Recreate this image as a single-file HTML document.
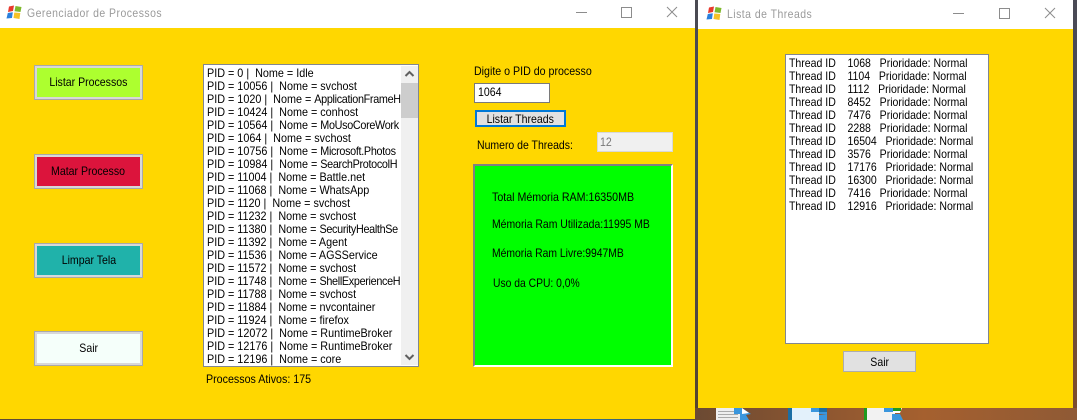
<!DOCTYPE html>
<html><head><meta charset="utf-8"><style>
html,body{margin:0;padding:0;width:1077px;height:420px;overflow:hidden;background:#3e3a36}
*{box-sizing:border-box}
body{position:relative;font-family:"Liberation Sans",sans-serif;font-size:12px;color:#000;line-height:13px}
.a{position:absolute}
.t{position:absolute;white-space:pre;transform-origin:0 0;transform:scaleX(.88)}
.btn{position:absolute;text-align:center;white-space:pre}
.btn span{display:inline-block;transform:scaleX(.88)}
.ti{position:absolute;font-size:12px;color:#9a9a9a;letter-spacing:.55px;white-space:pre;transform-origin:0 0;transform:scaleX(.87)}
.n{letter-spacing:-.35px}
</style></head><body>
<div class="a" style="left:695px;top:408px;width:382px;height:12px;background:linear-gradient(90deg,#6b4a33,#8a5530 30%,#a5602f 60%,#8f5a35)"></div>
<div class="a" style="left:695px;top:0;width:3px;height:408px;background:linear-gradient(#4a4a52 60%,#54432f)"></div>
<div class="a" style="left:1073px;top:0;width:4px;height:408px;background:linear-gradient(#4a4a55 55%,#7c4d2e 92%)"></div>
<div class="a" style="left:0;top:419px;width:695px;height:1px;background:linear-gradient(90deg,#5a4a3a,#6a5a50 30%,#3e3a36 60%,#2f6f90 85%,#5a4a3a)"></div>

<svg class="a" style="left:716px;top:408px" width="190" height="12" viewBox="0 0 190 12">
<rect x="0" y="0" width="26" height="12" fill="#efefef"/><rect x="2" y="3" width="20" height="1" fill="#aaa"/><rect x="2" y="6" width="20" height="1" fill="#aaa"/><rect x="2" y="9" width="20" height="1" fill="#aaa"/><rect x="18" y="0" width="8" height="6" fill="#3a96dd"/><path d="M26 0l9 6-5 1 3 5H24V6z" fill="#3a96dd"/><path d="M26 0l7 5-7 1z" fill="#fff"/>
<rect x="72" y="0" width="4" height="12" fill="#1c6ea4"/><rect x="76" y="0" width="27" height="12" fill="#e3f1fb"/><rect x="95" y="0" width="8" height="4" fill="#3a96dd"/><path d="M103 0h8v6l-8 1v5h8V6h-8z" fill="#3a96dd"/><rect x="103" y="0" width="8" height="4" fill="#1c6ea4"/>
<rect x="148" y="0" width="3" height="12" fill="#1f9a1f"/><rect x="151" y="0" width="28" height="12" fill="#f2f2f2"/><rect x="168" y="0" width="9" height="4" fill="#3a96dd"/><path d="M177 0h9l-2 5h-7z" fill="#fff"/><path d="M177 0h8v3h-8z" fill="#1f9a1f"/><path d="M176 6h8l3 6h-11z" fill="#3a96dd"/>
</svg>

<!-- janela 1 -->
<div class="a" style="left:0;top:0;width:695px;height:28px;background:#fff"></div>
<div class="a" style="left:0;top:28px;width:695px;height:391px;background:#ffd700"></div>
<svg class="a" style="left:6px;top:5px" width="17" height="15" viewBox="0 0 17 15"><path d="M3 1.500 8 .5 7 6 2 7z" fill="#e8382c"/><path d="M9.500 1 15.500 2 14.500 7 8.500 6.200z" fill="#7fb92c"/><path d="M1.800 8 6.800 7.300 6 13 .5 13.500z" fill="#2a80dd"/><path d="M8.300 7.500 14.300 8 13.500 14 7.500 13z" fill="#f6c226"/></svg>
<div class="ti" style="left:27px;top:7px">Gerenciador de Processos</div>
<svg class="a" style="left:575px;top:5px" width="110" height="18" viewBox="0 0 110 18" fill="none" stroke="#8c8c8c" stroke-width="1"><path d="M1 7.500h11"/><rect x="46.500" y="2.500" width="10" height="10"/><path d="M92 2l10 10M102 2 92 12"/></svg>

<div class="btn" style="left:34px;top:65px;width:109px;height:35px;border:3px solid #d8d8d8;outline:1px solid #a9a9a9;outline-offset:-1px;background:#adff2f;line-height:28px"><span>Listar Processos</span></div>
<div class="btn" style="left:34px;top:154px;width:109px;height:35px;border:3px solid #d8d8d8;outline:1px solid #a9a9a9;outline-offset:-1px;background:#dc143c;line-height:28px"><span>Matar Processo</span></div>
<div class="btn" style="left:34px;top:243px;width:109px;height:35px;border:3px solid #d8d8d8;outline:1px solid #a9a9a9;outline-offset:-1px;background:#20b2aa;line-height:28px"><span>Limpar Tela</span></div>
<div class="btn" style="left:34px;top:331px;width:109px;height:35px;border:3px solid #d8d8d8;outline:1px solid #a9a9a9;outline-offset:-1px;background:#f5fffa;line-height:28px"><span>Sair</span></div>

<div class="a" style="left:203px;top:64px;width:216px;height:303px;background:#fff;border:1px solid #828790"></div>
<div class="t" style="left:207px;top:67px;width:216px;height:299px;overflow:hidden;transform:scaleX(.9)">PID = 0 |  Nome = Idle
PID = 10056 |  Nome = svchost
PID = 1020 |  Nome = <span class="n">ApplicationFrameH</span>
PID = 10424 |  Nome = conhost
PID = 10564 |  Nome = <span class="n">MoUsoCoreWork</span>
PID = 1064 |  Nome = svchost
PID = 10756 |  Nome = <span class="n">Microsoft.Photos</span>
PID = 10984 |  Nome = <span class="n">SearchProtocolH</span>
PID = 11004 |  Nome = Battle.net
PID = 11068 |  Nome = WhatsApp
PID = 1120 |  Nome = svchost
PID = 11232 |  Nome = svchost
PID = 11380 |  Nome = <span class="n">SecurityHealthSe</span>
PID = 11392 |  Nome = Agent
PID = 11536 |  Nome = AGSService
PID = 11572 |  Nome = svchost
PID = 11748 |  Nome = <span class="n">ShellExperienceH</span>
PID = 11788 |  Nome = svchost
PID = 11884 |  Nome = nvcontainer
PID = 11924 |  Nome = firefox
PID = 12072 |  Nome = RuntimeBroker
PID = 12176 |  Nome = RuntimeBroker
PID = 12196 |  Nome = core</div>
<div class="a" style="left:401px;top:66px;width:17px;height:299px;background:#f0f0f0"></div>
<div class="a" style="left:401px;top:83px;width:17px;height:35px;background:#cdcdcd"></div>
<svg class="a" style="left:401px;top:66px" width="17" height="299" viewBox="0 0 17 299" fill="none" stroke="#606060" stroke-width="2"><path d="M4.500 10 8.500 6l4 4"/><path d="M4.500 289l4 4 4-4"/></svg>
<div class="t" style="left:206px;top:373px;transform:scaleX(.89)">Processos Ativos: 175</div>

<div class="t" style="left:474px;top:65px;transform:scaleX(.887)">Digite o PID do processo</div>
<div class="a" style="left:474px;top:83px;width:76px;height:20px;background:#fff;border:1px solid #7a7a7a"></div>
<div class="t" style="left:478px;top:86px">1064</div>
<div class="btn" style="left:475px;top:110px;width:91px;height:17px;background:#e1e1e1;border:2px solid #0078d7;line-height:14px"><span>Listar Threads</span></div>
<div class="t" style="left:477px;top:139px;transform:scaleX(.873)">Numero de Threads:</div>
<div class="a" style="left:597px;top:132px;width:76px;height:20px;background:#f0f0f0;border:1px solid #d8d8d8"></div>
<div class="t" style="left:600px;top:136px;color:#777">12</div>

<div class="a" style="left:473px;top:164px;width:200px;height:203px;background:#0f0;border:2px solid;border-color:#808080 #fff #fff #808080"></div>
<div class="t" style="left:492px;top:191px;transform:scaleX(.8875)">Total Mémoria RAM:16350MB</div>
<div class="t" style="left:492px;top:218px;transform:scaleX(.868)">Mémoria Ram Utilizada:11995 MB</div>
<div class="t" style="left:492px;top:247px;transform:scaleX(.863)">Mémoria Ram Livre:9947MB</div>
<div class="t" style="left:493px;top:277px;transform:scaleX(.861)">Uso da CPU: 0,0%</div>

<!-- janela 2 -->
<div class="a" style="left:698px;top:0;width:375px;height:29px;background:#fff"></div>
<div class="a" style="left:698px;top:29px;width:375px;height:379px;background:#ffd700"></div>
<svg class="a" style="left:706px;top:6px" width="17" height="15" viewBox="0 0 17 15"><path d="M3 1.500 8 .5 7 6 2 7z" fill="#e8382c"/><path d="M9.500 1 15.500 2 14.500 7 8.500 6.200z" fill="#7fb92c"/><path d="M1.800 8 6.800 7.300 6 13 .5 13.500z" fill="#2a80dd"/><path d="M8.300 7.500 14.300 8 13.500 14 7.500 13z" fill="#f6c226"/></svg>
<div class="ti" style="left:727px;top:8px">Lista de Threads</div>
<svg class="a" style="left:953px;top:6px" width="110" height="18" viewBox="0 0 110 18" fill="none" stroke="#8c8c8c" stroke-width="1"><path d="M0 7.500h11"/><rect x="46.500" y="2.500" width="10" height="10"/><path d="M92 2l10 10M102 2 92 12"/></svg>
<div class="a" style="left:785px;top:54px;width:204px;height:290px;background:#fff;border:1px solid #828790"></div>
<div class="t" style="left:789px;top:57px;transform:scaleX(.877)">Thread ID    1068   Prioridade: Normal
Thread ID    1104   Prioridade: Normal
Thread ID    1112   Prioridade: Normal
Thread ID    8452   Prioridade: Normal
Thread ID    7476   Prioridade: Normal
Thread ID    2288   Prioridade: Normal
Thread ID    16504   Prioridade: Normal
Thread ID    3576   Prioridade: Normal
Thread ID    17176   Prioridade: Normal
Thread ID    16300   Prioridade: Normal
Thread ID    7416   Prioridade: Normal
Thread ID    12916   Prioridade: Normal</div>
<div class="btn" style="left:843px;top:351px;width:73px;height:21px;background:#e1e1e1;border:1px solid #adadad;line-height:21px"><span>Sair</span></div>
</body></html>
